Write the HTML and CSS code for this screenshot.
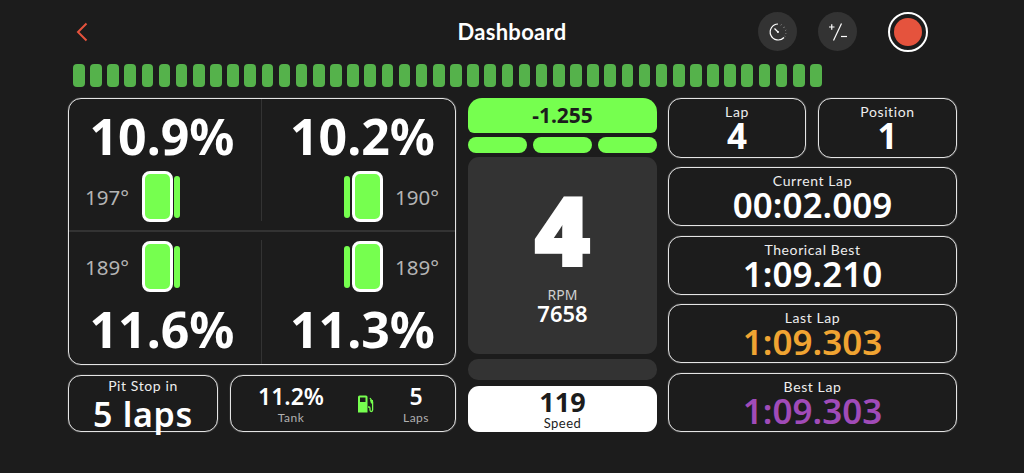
FILE: index.html
```html
<!DOCTYPE html>
<html>
<head>
    <title>Dashboard</title>
    <link rel="stylesheet" href="styles.css">
</head>
<body>
    <!-- Top bar -->
    <div class="header">
        <svg class="back" width="12" height="20" viewBox="0 0 12 20"><path d="M10.5 1.5 L2 10 L10.5 18.5" fill="none" stroke="#e5533d" stroke-width="2"/></svg>
        <div class="title">Dashboard</div>
        <div class="round-btn gauge-btn">
            <svg width="20" height="20" viewBox="0 0 20 20" fill="none" stroke="#fff">
                <path d="M10 2 A8 8 0 1 0 16 15.5" stroke-width="1.2"/>
                <path d="M13 2.8 L13.2 3M16 5 L16.2 5.3M17.6 8 L17.7 8.3M17.9 11.5 L17.8 11.8M17 14 L16.9 14.2" stroke-width="1.3"/>
                <path d="M6.5 6.5 L10 10" stroke-width="1.3"/>
                <circle cx="10" cy="10" r="1" fill="#fff" stroke="none"/>
            </svg>
        </div>
        <div class="round-btn delta-btn">
            <svg width="20" height="20" viewBox="0 0 20 20" fill="none" stroke="#fff" stroke-width="1.2">
                <path d="M1 5 H6.5 M3.75 2.2 V7.8"/>
                <path d="M13.5 1.5 L5.5 18.5"/>
                <path d="M13 14.5 H19"/>
            </svg>
        </div>
        <div class="record"><div class="record-dot"></div></div>
    </div>

    <!-- Rev lights -->
    <div class="lights" id="lights"></div>

    <div class="main">
        <!-- Left column -->
        <div class="col-left">
            <div class="tyres">
                <div class="tyre-cell top">
                    <div class="wear">10.9%</div>
                    <div class="tyre-row">
                        <span class="temp">197°</span>
                        <div class="tyre"></div>
                        <div class="brake"></div>
                    </div>
                </div>
                <div class="tyre-cell top right">
                    <div class="wear">10.2%</div>
                    <div class="tyre-row">
                        <div class="brake"></div>
                        <div class="tyre"></div>
                        <span class="temp">190°</span>
                    </div>
                </div>
                <div class="tyre-cell bottom">
                    <div class="tyre-row">
                        <span class="temp">189°</span>
                        <div class="tyre"></div>
                        <div class="brake"></div>
                    </div>
                    <div class="wear">11.6%</div>
                </div>
                <div class="tyre-cell bottom right">
                    <div class="tyre-row">
                        <div class="brake"></div>
                        <div class="tyre"></div>
                        <span class="temp">189°</span>
                    </div>
                    <div class="wear">11.3%</div>
                </div>
            </div>
            <div class="left-bottom">
                <div class="card pit">
                    <div class="label">Pit Stop in</div>
                    <div class="pit-value">5 laps</div>
                </div>
                <div class="card fuel">
                    <div class="fuel-item">
                        <div class="fuel-value">11.2%</div>
                        <div class="fuel-label">Tank</div>
                    </div>
                    <svg class="fuel-icon" width="17" height="18" viewBox="0 0 17 18">
                        <path d="M1 2 Q1 0.5 2.5 0.5 H9 Q10.5 0.5 10.5 2 V17.5 H1 Z M3 2.5 V7 H8.5 V2.5 Z" fill="#76ff4f" fill-rule="evenodd"/>
                        <path d="M11 12 H12 Q13 12 13 13.5 V15 Q13 16.5 14.3 16.5 Q15.6 16.5 15.6 15 V7 L13 3" fill="none" stroke="#76ff4f" stroke-width="1.3"/>
                        <path d="M13 5 H16 V8.5 H14 Z" fill="#76ff4f"/>
                    </svg>
                    <div class="fuel-item">
                        <div class="fuel-value">5</div>
                        <div class="fuel-label">Laps</div>
                    </div>
                </div>
            </div>
        </div>

        <!-- Center column -->
        <div class="col-center">
            <div class="delta">-1.255</div>
            <div class="segments">
                <div class="segment"></div>
                <div class="segment"></div>
                <div class="segment"></div>
            </div>
            <div class="gear-box">
                <div class="gear">4</div>
                <div class="rpm-label">RPM</div>
                <div class="rpm">7658</div>
            </div>
            <div class="empty-bar"></div>
            <div class="speed-box">
                <div class="speed">119</div>
                <div class="speed-label">Speed</div>
            </div>
        </div>

        <!-- Right column -->
        <div class="col-right">
            <div class="small-cards">
                <div class="card stat">
                    <div class="label">Lap</div>
                    <div class="stat-value">4</div>
                </div>
                <div class="card stat">
                    <div class="label">Position</div>
                    <div class="stat-value">1</div>
                </div>
            </div>
            <div class="card stat">
                <div class="label">Current Lap</div>
                <div class="time">00:02.009</div>
            </div>
            <div class="card stat">
                <div class="label">Theorical Best</div>
                <div class="time">1:09.210</div>
            </div>
            <div class="card stat">
                <div class="label">Last Lap</div>
                <div class="time orange">1:09.303</div>
            </div>
            <div class="card stat">
                <div class="label">Best Lap</div>
                <div class="time purple">1:09.303</div>
            </div>
        </div>
    </div>

    <script>
        // Rev lights are all the same, so build them here
        const lights = document.getElementById('lights');
        for (let i = 0; i < 44; i++) {
            const light = document.createElement('div');
            light.className = 'light';
            lights.appendChild(light);
        }
    </script>
</body>
</html>
```

FILE: styles.css
```css
body {
    margin: 0;
    padding: 0;
    height: 473px;
    overflow: hidden;
    background-color: #1c1c1c;
    color: white;
    font-family: "Noto Sans", sans-serif;
}

/* Top bar */
.header {
    height: 64px;
    box-sizing: border-box;
    padding: 12px 96px 0 76px;
    display: flex;
    align-items: flex-start;
    position: relative;
}

.back {
    margin-top: 10px;
}

.title {
    position: absolute;
    left: 0;
    right: 0;
    top: 19px;
    text-align: center;
    font-family: Lato, sans-serif;
    font-size: 22px;
    line-height: 26px;
    font-weight: 700;
    letter-spacing: 0.3px;
}

.round-btn {
    width: 39px;
    height: 39px;
    border-radius: 50%;
    background-color: #333333;
    display: flex;
    align-items: center;
    justify-content: center;
}

.gauge-btn {
    margin-left: auto;
}

.delta-btn {
    margin-left: 21px;
}

.record {
    width: 40px;
    height: 40px;
    box-sizing: border-box;
    margin-left: 31px;
    border: 2px solid white;
    border-radius: 50%;
    padding: 4px;
}

.record-dot {
    width: 100%;
    height: 100%;
    border-radius: 50%;
    background-color: #e5533d;
}

/* Rev lights */
.lights {
    height: 23px;
    margin-left: 73px;
    display: flex;
    gap: 5.5px;
}

.light {
    width: 11.65px;
    height: 100%;
    border-radius: 4px;
    background-color: #55b24b;
}

/* Columns */
.main {
    display: flex;
    margin: 11px 0 0 68px;
    height: 334px;
}

.col-left {
    width: 388px;
    display: flex;
    flex-direction: column;
    gap: 10px;
}

.col-center {
    width: 189px;
    margin-left: 12px;
    display: flex;
    flex-direction: column;
}

.col-right {
    width: 289px;
    margin-left: 11px;
    display: flex;
    flex-direction: column;
    gap: 9.5px;
}

.card {
    box-sizing: border-box;
    border: 1px solid #e4e4e4;
    border-radius: 13px;
    box-shadow: 0 0 1px rgba(255,255,255,0.7);
}

.label {
    font-family: Lato, sans-serif;
    font-size: 14px;
    line-height: 16px;
    letter-spacing: 0.6px;
    color: #eeeeee;
}

/* Tyres */
.tyres {
    height: 267px;
    box-sizing: border-box;
    border: 1px solid #e4e4e4;
    border-radius: 13px;
    box-shadow: 0 0 1px rgba(255,255,255,0.7);
    display: grid;
    grid-template-columns: 1fr 1fr;
    grid-template-rows: 133px 1fr;
}

.tyre-cell {
    box-sizing: border-box;
    padding: 0 16px;
    display: flex;
    flex-direction: column;
    position: relative;
}

.tyre-cell.top {
    border-bottom: 2px solid #333333;
    padding-top: 6px;
}

.tyre-cell.bottom {
    padding-top: 9px;
}

/* vertical divider stops short of the horizontal one */
.tyre-cell.right::before {
    content: "";
    position: absolute;
    left: -1px;
    width: 1px;
    background-color: #333333;
}

.tyre-cell.top.right::before {
    top: 0;
    bottom: 9px;
}

.tyre-cell.bottom.right::before {
    top: 8px;
    bottom: 0;
}

.wear {
    font-size: 50px;
    line-height: 62px;
    font-weight: 700;
    text-align: center;
    padding-right: 7px;
}

.tyre-cell.right .wear {
    padding: 0 1px 0 9px;
}

.tyre-cell.top .wear {
    margin-bottom: 4px;
}

.tyre-cell.bottom .wear {
    margin-top: 6px;
}

.tyre-row {
    display: flex;
    align-items: center;
}

.tyre-cell.right .tyre-row {
    justify-content: flex-end;
}

.temp {
    font-size: 20.5px;
    color: #b4b4b4;
    width: 44px;
}

.tyre {
    width: 31px;
    height: 51px;
    box-sizing: border-box;
    border: 3px solid white;
    border-radius: 8px;
    background-color: #76ff4f;
    margin-left: 13px;
}

.brake {
    width: 6px;
    height: 42px;
    border-radius: 3px;
    background-color: #76ff4f;
    margin-left: 1px;
}

.tyre-cell.right .brake {
    margin: 0 2px 0 0;
}

.tyre-cell.right .tyre {
    margin: 0 12px 0 0;
}

/* Pit stop + fuel */
.left-bottom {
    display: flex;
    gap: 12px;
    height: 57px;
}

.pit {
    width: 150px;
    text-align: center;
    padding-top: 2px;
}

.pit-value {
    font-size: 34px;
    line-height: 36px;
    font-weight: 600;
    letter-spacing: 0.7px;
    margin-top: 2px;
}

.fuel {
    width: 226px;
    display: flex;
    align-items: flex-start;
    padding-top: 6px;
}

.fuel-item {
    text-align: center;
}

.fuel-item:first-child {
    width: 72px;
    margin-left: 24px;
}

.fuel-item:last-child {
    width: 40px;
    margin-left: 22px;
}

.fuel-icon {
    margin: 13px 0 0 30px;
}

.fuel-value {
    font-size: 23px;
    line-height: 28px;
    font-weight: 600;
}

.fuel-label {
    font-family: Lato, sans-serif;
    font-size: 12px;
    line-height: 16px;
    letter-spacing: 0.5px;
    color: #b0b0b0;
}

/* Center */
.delta {
    height: 35px;
    border-radius: 14px 14px 6px 6px;
    background-color: #76ff4f;
    color: #1c1c1c;
    font-size: 21px;
    font-weight: 700;
    line-height: 35px;
    text-align: center;
}

.segments {
    display: flex;
    gap: 6px;
    height: 16px;
    margin-top: 4px;
}

.segment {
    flex: 1;
    border-radius: 8px;
    background-color: #76ff4f;
}

.gear-box {
    height: 197px;
    margin-top: 4px;
    border-radius: 11px;
    background-color: #333333;
    text-align: center;
}

.gear {
    font-size: 96px;
    line-height: 116px;
    font-weight: 900;
    -webkit-text-stroke: 2px white;
    margin-top: 14px;
}

.rpm-label {
    font-size: 14px;
    line-height: 16px;
    color: #d0d0d0;
}

.rpm {
    font-size: 22px;
    line-height: 24px;
    font-weight: 600;
    margin-top: -2px;
}

.empty-bar {
    height: 21px;
    margin-top: 5px;
    border-radius: 10px;
    background-color: #333333;
}

.speed-box {
    height: 46px;
    margin-top: 6px;
    border-radius: 11px;
    background-color: white;
    color: #1c1c1c;
    text-align: center;
}

.speed {
    font-size: 27px;
    line-height: 30px;
    font-weight: 700;
    padding-top: 1px;
}

.speed-label {
    font-family: Lato, sans-serif;
    font-size: 13px;
    line-height: 13px;
    letter-spacing: 0.5px;
}

/* Right */
.small-cards {
    display: flex;
    gap: 12px;
}

.small-cards .stat {
    flex: 1;
}

.small-cards .stat:first-child {
    flex: 0 0 138px;
}

.stat {
    height: 59.5px;
    text-align: center;
    padding-top: 5px;
}

.stat-value {
    font-size: 35px;
    line-height: 32px;
    font-weight: 700;
}

.time {
    font-size: 35px;
    line-height: 32px;
    font-weight: 600;
}

.orange {
    color: #f0a432;
}

.purple {
    color: #a04bb8;
}
```
